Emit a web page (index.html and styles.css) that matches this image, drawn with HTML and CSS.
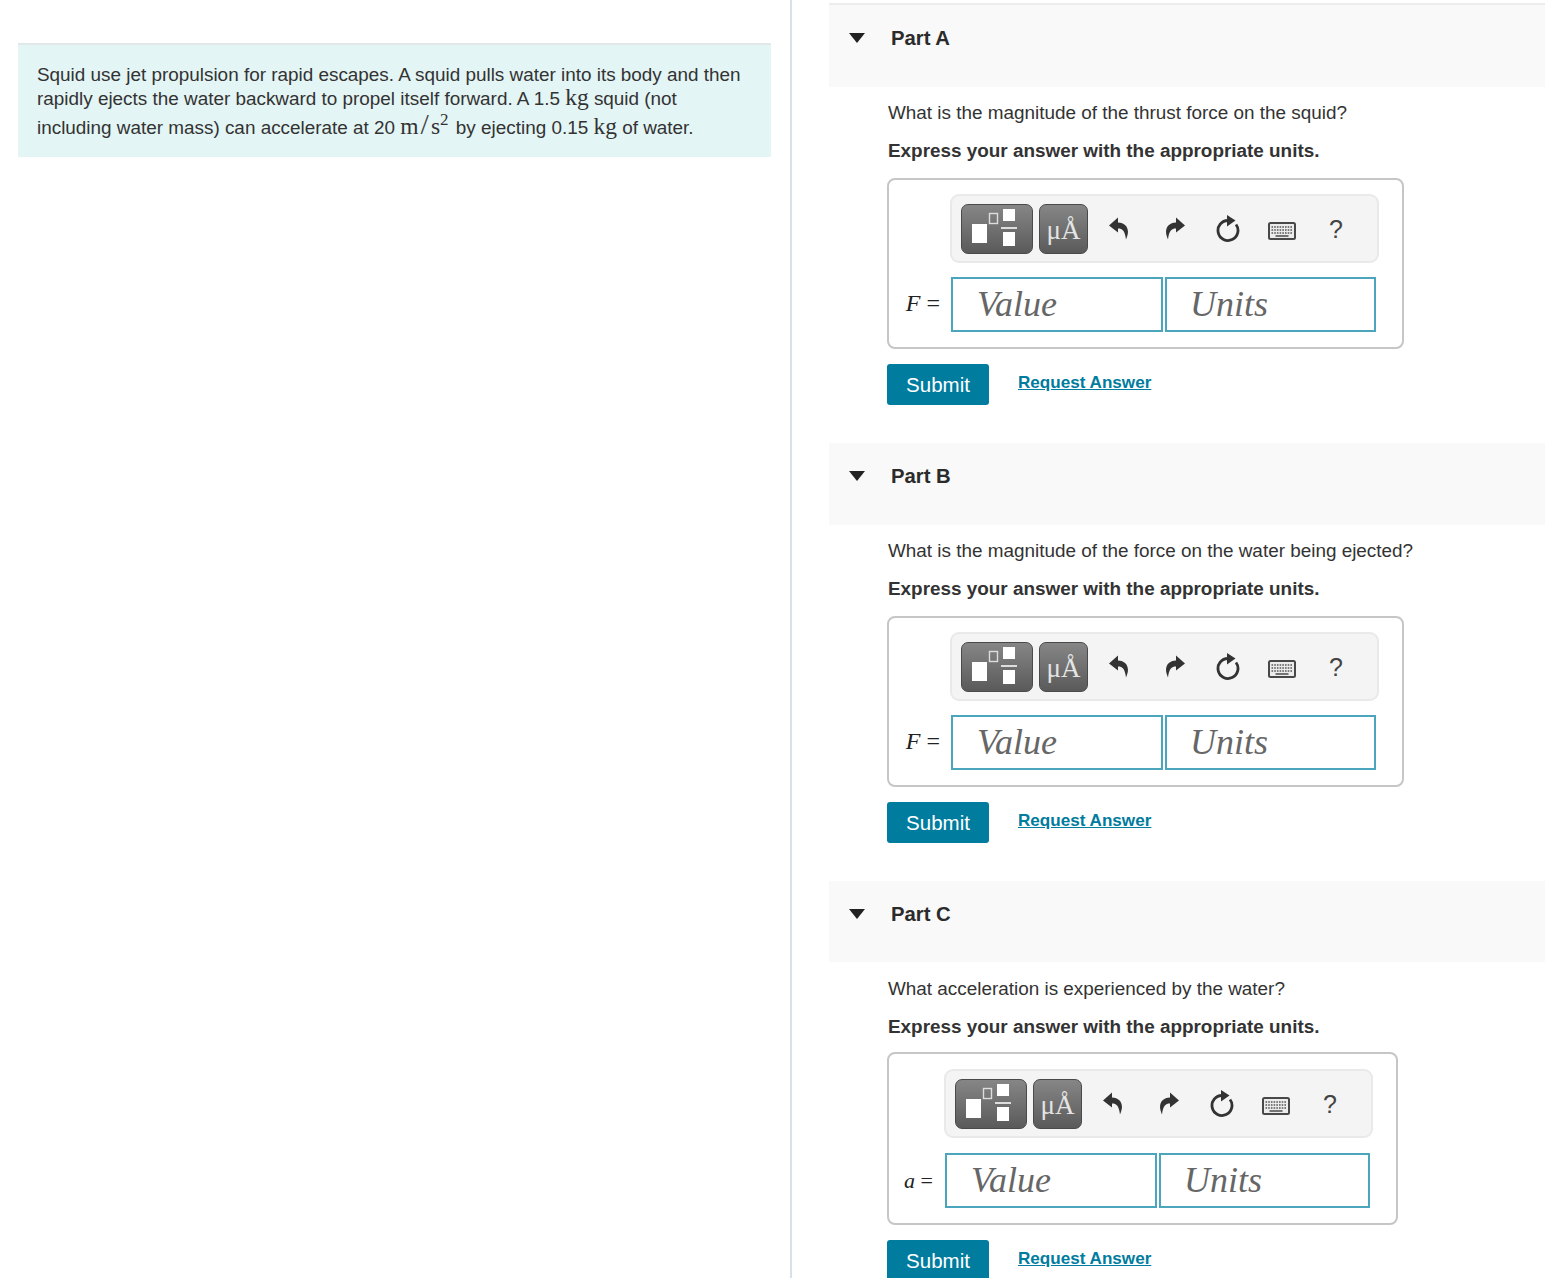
FILE: index.html
```html
<!DOCTYPE html>
<html>
<head>
	<meta charset="utf-8">
	<meta name="viewport" content="width=device-width, initial-scale=1">
	<title>Squid Jet Propulsion</title>
	<link rel="stylesheet" href="styles.css">
</head>
<body>
	<svg class="defs" width="0" height="0">
		<symbol id="i-undo" viewBox="0 0 20 23"><path d="M9 0.5 L0 8.5 L9 15.5 V11.5 C13.5 11.5 16 14 17 22.5 C21.5 13 18 6 9 5.5 Z"/></symbol>
		<symbol id="i-reset" viewBox="0 0 26 27"><path d="M13 5.5 A10 10 0 1 0 21 9.5" fill="none" stroke="#333" stroke-width="2.8"/><path d="M12 0 L20.5 5.5 L12 11.5 Z"/></symbol>
		<symbol id="i-keys" viewBox="0 0 28 18">
			<rect x="1" y="1" width="26" height="16" rx="1.5" fill="#ececec" stroke="#484848" stroke-width="2"/>
			<path d="M3.5 5H24.5M3.5 8H24.5M3.5 11H24.5" stroke="#555" stroke-width="1.3" stroke-dasharray="1.6 1.1"/>
			<path d="M7.5 14H20.5" stroke="#555" stroke-width="1.6"/>
		</symbol>
		<symbol id="i-templ" viewBox="0 0 72 50">
			<rect x="11" y="20" width="15" height="19" fill="#fff"/>
			<rect x="28.5" y="9.5" width="8" height="10" fill="none" stroke="#ddd" stroke-width="1.4"/>
			<rect x="42" y="5" width="12" height="12" fill="#fff"/>
			<rect x="40" y="23" width="16" height="2" fill="#ddd"/>
			<rect x="42" y="28" width="12" height="14" fill="#fff"/>
		</symbol>
	</svg>

	<div class="left">
		<div class="intro">
			<p>Squid use jet propulsion for rapid escapes. A squid pulls water into its body and then rapidly ejects the water backward to propel itself forward. A 1.5 <span class="math">kg</span> squid (not including water mass) can accelerate at 20 <span class="math">m<span class="slash">/</span>s<sup>2</sup></span> by ejecting 0.15 <span class="math">kg</span> of water.</p>
		</div>
	</div>

	<div class="right">
		<section class="part">
			<div class="part-head"><span class="caret"></span><h2>Part A</h2></div>
			<div class="part-body">
				<p class="q">What is the magnitude of the thrust force on the squid?</p>
				<p class="q bold">Express your answer with the appropriate units.</p>
				<div class="box">
					<div class="toolbar">
						<button class="tb tb-templ"><svg width="72" height="50"><use href="#i-templ"/></svg></button>
						<button class="tb tb-mu">μÅ</button>
						<svg class="ic ic-undo"><use href="#i-undo"/></svg>
						<svg class="ic ic-redo"><use href="#i-undo"/></svg>
						<svg class="ic ic-reset"><use href="#i-reset"/></svg>
						<svg class="ic-keys"><use href="#i-keys"/></svg>
						<span class="help">?</span>
					</div>
					<div class="row">
						<label class="var"><i>F</i> =</label>
						<div class="field">Value</div>
						<div class="field">Units</div>
					</div>
				</div>
				<div class="actions">
					<button class="submit">Submit</button>
					<a class="req" href="#">Request Answer</a>
				</div>
			</div>
		</section>

		<section class="part">
			<div class="part-head"><span class="caret"></span><h2>Part B</h2></div>
			<div class="part-body">
				<p class="q">What is the magnitude of the force on the water being ejected?</p>
				<p class="q bold">Express your answer with the appropriate units.</p>
				<div class="box">
					<div class="toolbar">
						<button class="tb tb-templ"><svg width="72" height="50"><use href="#i-templ"/></svg></button>
						<button class="tb tb-mu">μÅ</button>
						<svg class="ic ic-undo"><use href="#i-undo"/></svg>
						<svg class="ic ic-redo"><use href="#i-undo"/></svg>
						<svg class="ic ic-reset"><use href="#i-reset"/></svg>
						<svg class="ic-keys"><use href="#i-keys"/></svg>
						<span class="help">?</span>
					</div>
					<div class="row">
						<label class="var"><i>F</i> =</label>
						<div class="field">Value</div>
						<div class="field">Units</div>
					</div>
				</div>
				<div class="actions">
					<button class="submit">Submit</button>
					<a class="req" href="#">Request Answer</a>
				</div>
			</div>
		</section>

		<section class="part part-c">
			<div class="part-head"><span class="caret"></span><h2>Part C</h2></div>
			<div class="part-body">
				<p class="q">What acceleration is experienced by the water?</p>
				<p class="q bold">Express your answer with the appropriate units.</p>
				<div class="box">
					<div class="toolbar">
						<button class="tb tb-templ"><svg width="72" height="50"><use href="#i-templ"/></svg></button>
						<button class="tb tb-mu">μÅ</button>
						<svg class="ic ic-undo"><use href="#i-undo"/></svg>
						<svg class="ic ic-redo"><use href="#i-undo"/></svg>
						<svg class="ic ic-reset"><use href="#i-reset"/></svg>
						<svg class="ic-keys"><use href="#i-keys"/></svg>
						<span class="help">?</span>
					</div>
					<div class="row">
						<label class="var"><i>a</i> =</label>
						<div class="field">Value</div>
						<div class="field">Units</div>
					</div>
				</div>
				<div class="actions">
					<button class="submit">Submit</button>
					<a class="req" href="#">Request Answer</a>
				</div>
			</div>
		</section>
	</div>
</body>
</html>
```

FILE: styles.css
```css
html, body {
	height: 1278px;
	overflow: hidden;
}
body {
	margin: 0;
	display: flex;
	background: #fff;
	color: #333;
	font-family: "Liberation Sans", Arial, sans-serif;
	font-size: 18.9px;
}
p {
	margin: 0;
}
.defs {
	position: absolute;
}

/* left column */
.left {
	width: 790px;
	flex: none;
	border-right: 2px solid #d5e2ea;
}
.intro {
	margin: 43px 0 0 18px;
	width: 753px;
	box-sizing: border-box;
	height: 114px;
	padding: 18px 20px 0 19px;
	background: #e4f5f5;
	border-top: 2px solid #e2e8e8;
	line-height: 24px;
}
.math {
	font-family: "Liberation Serif", serif;
	font-size: 23.5px;
	line-height: 0;
}
.slash {
	font-size: 30px;
	line-height: 25px;
	margin: 0 2px;
	color: #444;
}
.math sup {
	font-size: 17px;
	line-height: 0;
	margin-right: 2px;
}

/* right column */
.right {
	flex: 1;
	margin-left: 37px;
	padding-top: 3px;
	min-width: 0;
}
.part {
	margin-bottom: 38px;
}
.part:first-child {
	border-top: 2px solid #ececec;
}
.part-head {
	height: 82px;
	box-sizing: border-box;
	background: #f9f9f9;
	display: flex;
	align-items: flex-start;
	padding: 20px 0 0 20px;
}
.caret {
	width: 0;
	height: 0;
	margin-top: 8px;
	border-left: 8px solid transparent;
	border-right: 8px solid transparent;
	border-top: 10px solid #222;
}
.part-head h2 {
	margin: 0 0 0 26px;
	font-size: 20.3px;
	line-height: 26px;
	font-weight: bold;
	color: #2b2b2b;
}
.part-body {
	padding: 13px 0 0 58px;
}
.q {
	line-height: 26px;
	margin-bottom: 12px;
	padding-left: 1px;
}
.bold {
	font-weight: bold;
	margin-bottom: 14px;
}

/* answer box */
.box {
	--label-w: 62px;
	width: 517px;
	height: 171px;
	box-sizing: border-box;
	border: 2px solid #c6c6c6;
	border-radius: 8px;
	padding-top: 14px;
}
.toolbar {
	margin-left: calc(var(--label-w) - 1px);
	width: 429px;
	height: 69px;
	box-sizing: border-box;
	background: #f4f4f4;
	border: 2px solid #e9e9e9;
	border-radius: 9px;
	display: flex;
	align-items: center;
	padding-left: 9px;
}
.tb {
	height: 50px;
	padding: 0;
	border: 1px solid #4a4a4a;
	border-radius: 7px;
	background: linear-gradient(#868686, #5a5a5a);
	color: #e4e4e4;
	flex: none;
}
.tb-templ {
	width: 72px;
	overflow: hidden;
}
.tb-templ svg {
	display: block;
	margin: -1px;
}
.tb-mu {
	width: 49px;
	margin-left: 6px;
	font-family: "Liberation Serif", serif;
	font-size: 27px;
	line-height: 40px;
	padding-top: 2px;
}
.ic {
	width: 20px;
	height: 23px;
	fill: #333;
	flex: none;
}
.ic-undo {
	margin-left: 21px;
}
.ic-redo {
	margin-left: 36px;
	transform: scaleX(-1);
}
.ic-reset {
	width: 26px;
	height: 27px;
	margin-left: 30px;
}
.ic-keys {
	width: 28px;
	height: 18px;
	margin-left: 27px;
	flex: none;
	margin-top: 5px;
}
.help {
	margin-left: 33px;
	font-size: 25px;
	color: #444;
	margin-top: 1px;
}
.row {
	display: flex;
	margin-top: 14px;
	height: 55px;
}
.var {
	width: var(--label-w);
	box-sizing: border-box;
	flex: none;
	text-align: right;
	padding-right: 11px;
	line-height: 52px;
	font-family: "Liberation Serif", serif;
	font-size: 24px;
	color: #222;
}
.field {
	width: 212px;
	box-sizing: border-box;
	border: 2px solid #4ba5bd;
	padding-left: 24px;
	margin-right: 2px;
	font-family: "Liberation Serif", serif;
	font-style: italic;
	font-size: 36px;
	line-height: 51px;
	color: #666;
}
.field + .field {
	width: 211px;
	padding-left: 23px;
}
.actions {
	display: flex;
	align-items: flex-start;
	margin-top: 15px;
}
.submit {
	width: 102px;
	height: 41px;
	padding: 0;
	border: none;
	border-radius: 3px;
	background: #007c9e;
	color: #fff;
	font-family: "Liberation Sans", Arial, sans-serif;
	font-size: 20.5px;
}
.req {
	margin: 6px 0 0 29px;
	font-weight: bold;
	font-size: 17.1px;
	line-height: 26px;
	color: #007c9e;
}

/* Part C sits a little tighter than the other two */
.part-c .part-head {
	height: 81px;
}
.part-c .part-body {
	padding-top: 14px;
}
.part-c .bold {
	margin-bottom: 12px;
}
.part-c .box {
	--label-w: 56px;
	width: 511px;
	height: 173px;
	padding-top: 15px;
}
.part-c .row {
	margin-top: 15px;
}
.part-c .var {
	font-size: 22px;
	line-height: 56px;
	padding-right: 12px;
}
```
